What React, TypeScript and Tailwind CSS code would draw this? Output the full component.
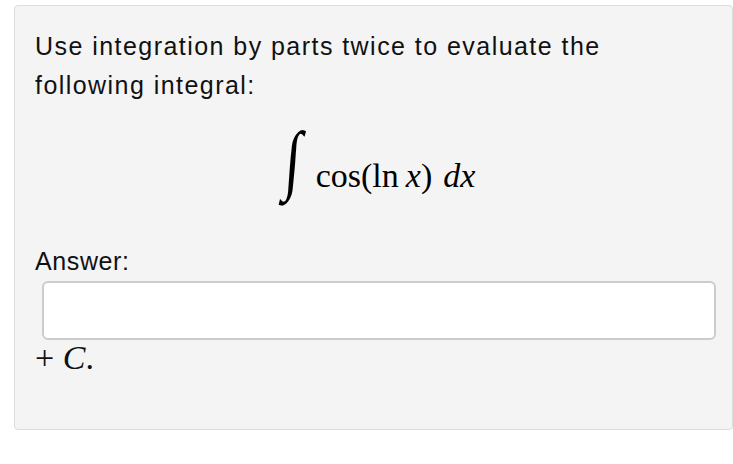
import React from "react";

export default function App() {
  return (
    <div className="min-h-[464px] w-[733px] bg-white pt-[5px] pl-[14px]" style={{ fontFamily: '"Liberation Sans", Arial, sans-serif' }}>
      <div className="h-[425px] w-[719px] rounded-[4px] border border-[#dcdcdc] bg-[#f4f4f4] pl-[20px] pr-[16px] pt-[21px] text-[#111]">
        <p className="text-[25px] leading-[39px] tracking-[1.45px]">
          Use integration by parts twice to evaluate the
          <br />
          following integral:
        </p>

        <div className="mt-[46px] flex h-[40px] items-baseline justify-center pl-[14px] font-['Liberation_Serif',serif] text-[34px] leading-[40px] text-black">
          <span className="inline-block origin-center -translate-x-[3px] -translate-y-[13px] -skew-x-[6deg] scale-x-[1.3] scale-y-[1.75] text-[44px] italic leading-none">∫</span>
          <span className="ml-[14px]">cos(ln</span>
          <span className="ml-[7px] italic">x</span>
          <span>)</span>
          <span className="ml-[11px] italic">dx</span>
        </div>

        <p className="mt-[55px] text-[25px] leading-[30px] tracking-[0.6px]">Answer:</p>
        <input
          type="text"
          className="mt-[5px] ml-[7px] block h-[59px] w-[674px] rounded-[6px] border-2 border-[#cccccc] bg-white outline-none"
        />
        <p className="font-['Liberation_Serif',serif] text-[34px] leading-[36px]">
          + <span className="italic">C</span>.
        </p>
      </div>
    </div>
  );
}
